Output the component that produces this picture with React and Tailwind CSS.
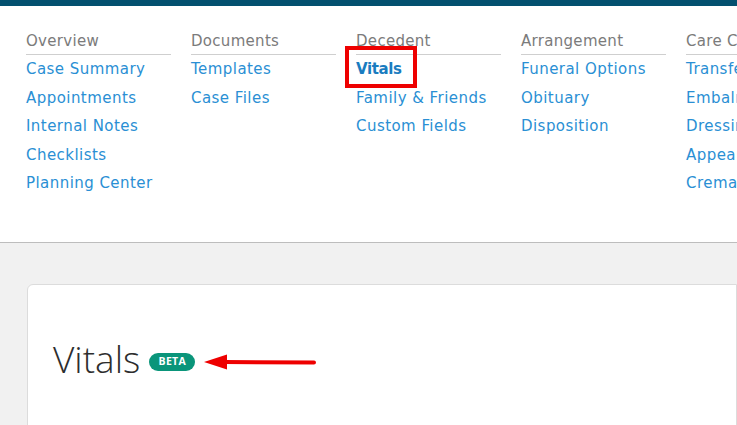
import React from 'react'

const columns = [
  { title: 'Overview', links: ['Case Summary', 'Appointments', 'Internal Notes', 'Checklists', 'Planning Center'] },
  { title: 'Documents', links: ['Templates', 'Case Files'] },
  { title: 'Decedent', links: ['Vitals', 'Family & Friends', 'Custom Fields'], active: 'Vitals' },
  { title: 'Arrangement', links: ['Funeral Options', 'Obituary', 'Disposition'] },
  { title: 'Care Center', links: ['Transfer', 'Embalming', 'Dressing', 'Appearance', 'Cremation'] },
]

function NavColumn({ title, links, active }) {
  return (
    <div className="w-[145px] shrink-0">
      <div className="text-[15px] tracking-[0.3px] leading-[20px] text-[#7b7b7b] pb-[3px] border-b border-[#cfcfcf] whitespace-nowrap">
        {title}
      </div>
      <ul>
        {links.map((l) => (
          <li key={l} className="leading-[28.5px] text-[15px] tracking-[0.45px] whitespace-nowrap">
            {l === active ? (
              <span className="relative font-bold text-[#1a7cc0] tracking-[-0.4px]">
                {l}
                <span className="absolute left-[-11px] top-[-14px] w-[72px] h-[42px] border-4 border-[#ee0000]" />
              </span>
            ) : (
              <span className="text-[#2a8fd4]">{l}</span>
            )}
          </li>
        ))}
      </ul>
    </div>
  )
}

export default function App() {
  return (
    <div className="w-[737px] h-[425px] overflow-hidden bg-[#f1f1f1]" style={{ fontFamily: '"DejaVu Sans", sans-serif' }}>
      <div className="h-[6px] bg-[#03506f]" />
      <nav className="bg-white border-b border-[#bdbdbd] pt-[25px] pb-[44px] pl-[26px]">
        <div className="flex gap-[20px]">
          {columns.map((c) => (
            <NavColumn key={c.title} {...c} />
          ))}
        </div>
      </nav>
      <main className="pt-[41px] pl-[27px]">
        <div className="bg-white border border-[#dcdcdc] rounded-tl-[6px] pt-[55px] pl-[25px] h-[200px]">
          <div className="flex items-center" style={{ fontFamily: '"Open Sans", sans-serif' }}>
            <h1 className="text-[37px] leading-none font-light text-[#2d2d2d]">Vitals</h1>
            <span className="ml-[9px] mt-[7px] w-[46px] h-[18px] rounded-full bg-[#0a957a] text-white text-[10.5px] font-bold flex items-center justify-center tracking-[0.3px]">
              BETA
            </span>
            <svg className="ml-[9px] mt-[7px]" width="112" height="16" viewBox="0 0 112 16">
              <polygon points="0,8 23,0.5 23,15.5" fill="#ee0000" />
              <line x1="20" y1="8" x2="110" y2="8.5" stroke="#ee0000" strokeWidth="4" strokeLinecap="round" />
            </svg>
          </div>
        </div>
      </main>
    </div>
  )
}
